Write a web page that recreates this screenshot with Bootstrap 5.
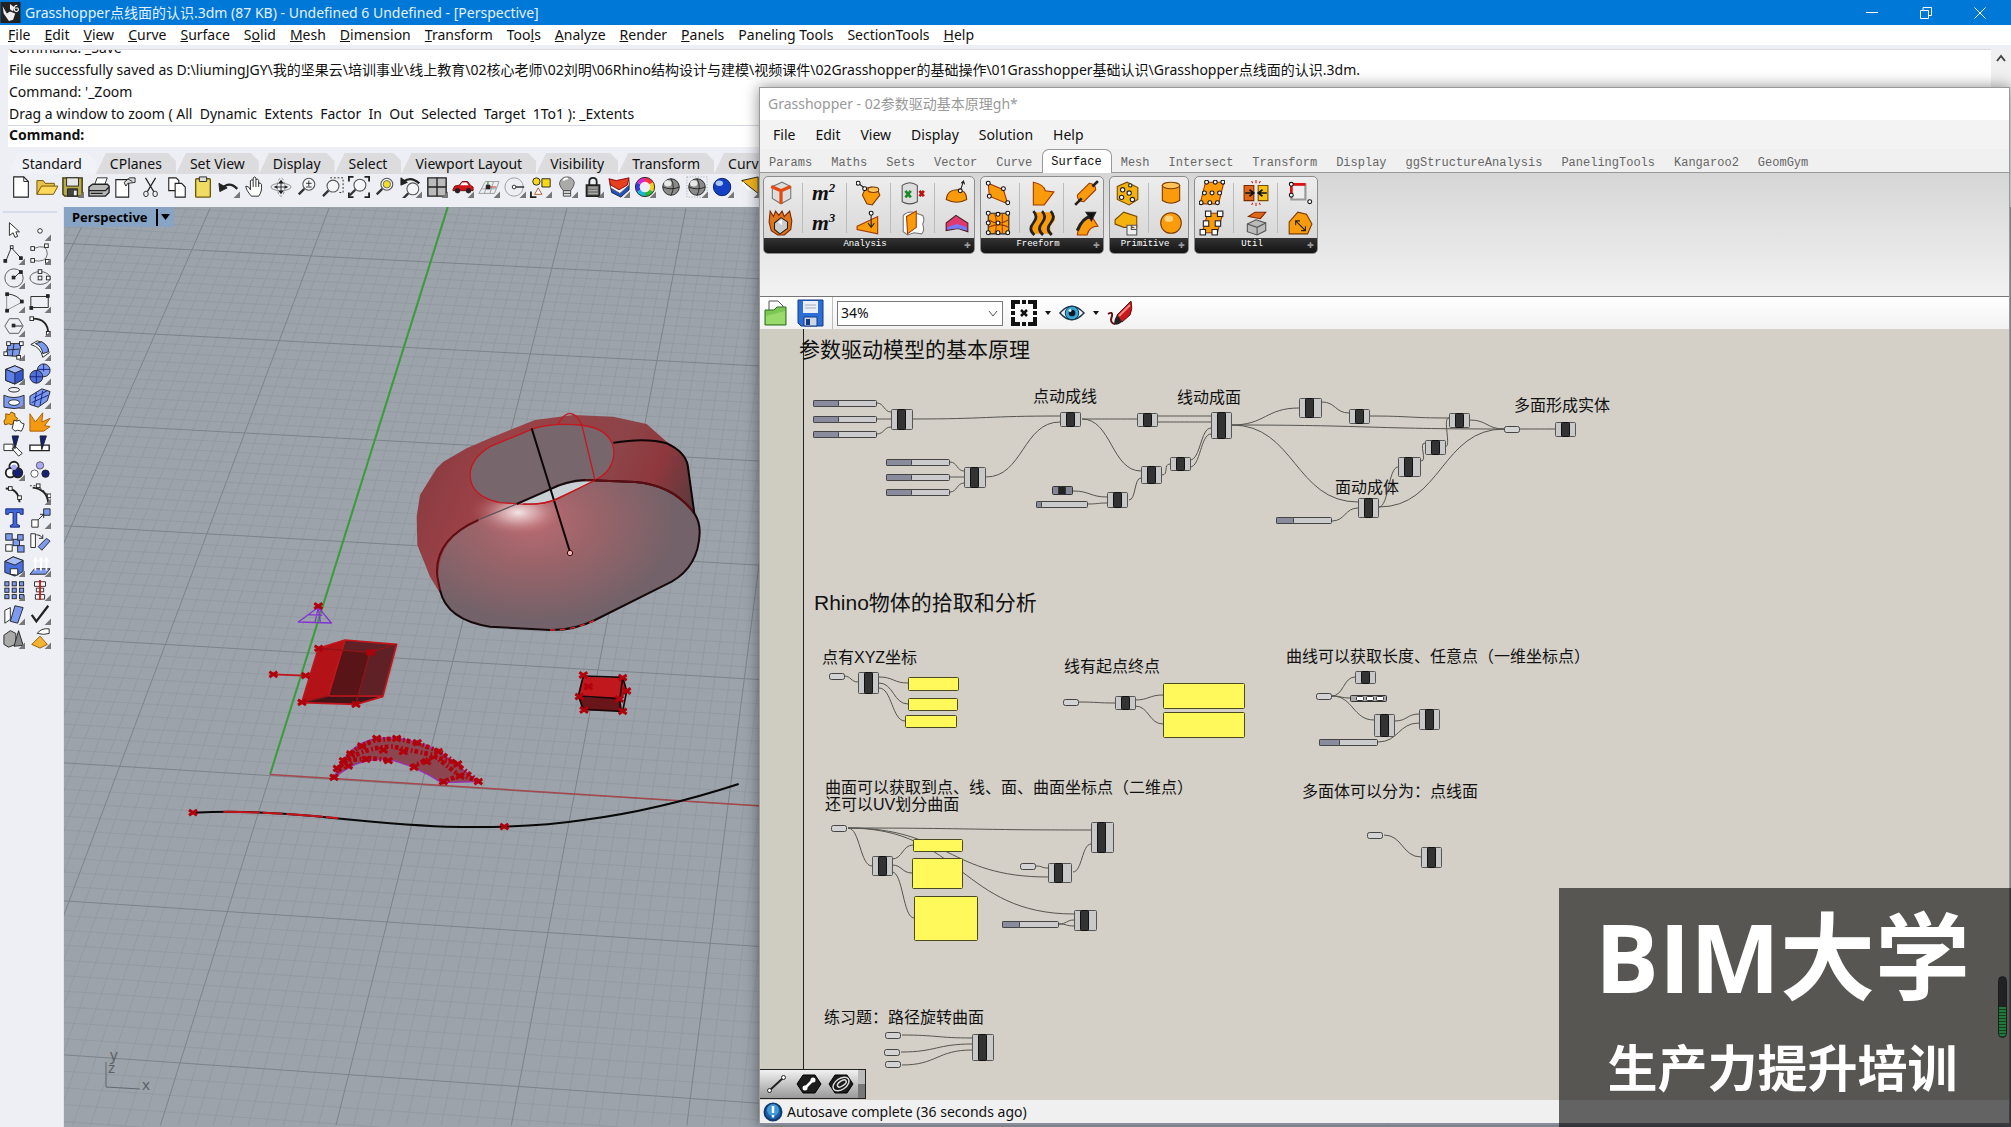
<!DOCTYPE html>
<html lang="zh-CN">
<head>
<meta charset="utf-8">
<meta name="viewport" content="width=device-width, initial-scale=1">
<title>Grasshopper点线面的认识.3dm</title>
<link href="https://cdn.jsdelivr.net/npm/bootstrap@5.3.0/dist/css/bootstrap.min.css" rel="stylesheet">
<style>
:root{--ui:"Noto Sans","Noto Sans CJK SC",sans-serif;--mono:"Liberation Mono","Noto Sans CJK SC",monospace;--chrome:#edeff5}
body{font:14px/20px var(--ui);color:#111;background:var(--chrome);height:100vh;overflow:hidden}
button{background:none;border:0;padding:0;color:inherit}
svg{display:block;flex:none}
.titlebar{height:25px;background:#0078d7;color:#e4f1fc}
.winbtn{width:54px;height:24px}
.menubar{height:20px;background:#fff;gap:14px}
.menubar a,.gh-menu a{color:#111;text-decoration:none}
.history{margin-left:8px;padding-left:1px;height:77px;background:#fff;border-top:1px solid #ddd;border-bottom:1px solid #d4d8e2;overflow:hidden;line-height:22px}
.prompt{margin-left:8px;padding-left:1px;height:21px;background:#fff;line-height:18px;font-weight:700}
.prompt input{border:0;outline:0;background:none;height:18px;padding:0}
.histscroll{width:20px;background:#f0f0f0}
.tooltabs{height:21px;margin:6px 0 0 8px;border-bottom:1px solid #d3d7e0}
.tooltabs button{height:21px;padding:0 14px;position:relative;background:#dcdcde;clip-path:polygon(10px 0,calc(100% - 8px) 0,100% 8px,100% 100%,0 100%)}
.tooltabs button.active{background:#f1f2f7}
.tools{height:33px;padding-left:8px}
.tools button{width:26px;height:26px;display:grid;place-items:center}
.tools svg,.side svg{width:22px;height:22px}
.side{width:64px;padding:3px 0 0 1px;border-right:1px solid #dfe3ea}
.side .grip{height:4px;margin:1px 6px 3px 2px;border-top:2px solid #d5dbea}
.side .pad{display:grid;grid-template-columns:26px 26px;grid-auto-rows:24px}
.side button{display:grid;place-items:center}
.view{background:#9ca3ab;position:relative;overflow:hidden}
.view>svg,.canvas>svg{position:absolute;inset:0;width:100%;height:100%}
.viewtag{position:absolute;left:0;top:0;height:20px;background:#87a4c5;font-size:13px;font-weight:700;padding:0 4px 0 8px;gap:8px;color:#000}
.viewtag i{border-left:2px solid #000;height:17px;padding-left:3px;display:flex;align-items:center}
/* Grasshopper window */
.gh{position:absolute;left:759px;right:1px;top:87px;bottom:2px;background:#f0f0f0;border:1px solid #999;border-bottom:2px solid #8a8e9c;box-shadow:0 0 14px rgba(0,0,0,.45)}
.gh-title{height:32px;background:#fff;color:#999;padding-left:8px}
.gh-menu{height:29px;background:#f3f3f3;gap:20px;padding-left:13px}
.gh-tabs{height:24px;padding-left:0;font:12px/24px var(--mono);color:#666;border-bottom:1px solid #999}
.gh-tabs button{height:24px;padding:0 10px 0 9px;padding-top:2px}
.gh-tabs button.active{color:#111;background:#fff;border:1px solid #999;border-bottom:0;border-radius:7px 7px 0 0;padding:0 9px 0 8px;height:24px}
.ribbon{height:123px;background:linear-gradient(#d6d6d6,#f2f2f2);padding:3px 0 0 3px;gap:5px}
.panelbox{height:78px;border:1px solid #8d8d8d;border-radius:5px;background:linear-gradient(#ededed,#d3d3d3);overflow:hidden}
.panelbox .cells{display:grid;grid-template-rows:28px 28px;grid-auto-flow:column;grid-auto-columns:28px;column-gap:16px;row-gap:2px;padding:2px 3px;height:61px}
.panelbox .cells button{display:grid;place-items:center;position:relative}
.panelbox .cells button:nth-child(2n+3)::before{content:"";position:absolute;left:-9px;top:4px;height:50px;border-left:1px solid #bbb}
.panelbox svg{width:26px;height:26px}
.cap{height:16px;background:linear-gradient(#333,#111);color:#fff;font:9px/13px var(--mono);position:relative;text-align:center;margin:0;padding-right:8px}
.cap::after{content:"✚";position:absolute;right:3px;top:1px;font:8px/14px "DejaVu Sans",sans-serif;color:#999}
.gh-tool{height:33px;background:linear-gradient(#fff,#f2f2f2);border-top:1px solid #777;padding-left:3px}
.gh-tool select{width:166px;height:25px;border:1px solid #7a7a7a;border-radius:0;background:#fff;padding:0 22px 0 3px;font-size:14px;appearance:none;color:#111}
.zoombox{position:relative}
.zoombox svg{position:absolute;right:5px;top:9px;pointer-events:none}
.tri{border:3px solid transparent;border-top:4px solid #111;border-bottom:0;margin:0 8px}
.canvas{background:#d4d0c8;position:relative;overflow:hidden}
.canvas text{font-family:"Liberation Sans","Noto Sans CJK SC",sans-serif;font-size:16px;fill:#111}
.canvas text.big{font-size:21px}
.dock{position:absolute;left:0;bottom:1px;height:30px;width:106px;border:1px solid #222;border-left:0;background:linear-gradient(#f2f2f2,#999);gap:6px;padding-left:4px}
.dock b{position:absolute;right:0;top:0;bottom:0;width:7px;background:linear-gradient(#bbb 50%,#777 50%)}
.gh-status{height:23px;gap:4px;padding-left:3px}
.mark-box{position:absolute;right:0;bottom:0;width:452px;height:239px;padding-right:5px;background:rgba(0,0,0,.59);color:#fff;font-weight:700;text-align:center;white-space:nowrap}
.mark-box .l1{font-family:"Open Sans","Noto Sans CJK SC",sans-serif;font-size:95px;line-height:104px;margin:16px 0 0}
.mark-box .l2{font-family:"Noto Sans CJK SC",sans-serif;font-size:50px;line-height:60px;margin:27px 0 0}
.meter{position:absolute;right:4px;bottom:89px;width:9px;height:62px;border-radius:5px;border:1px solid #1c1c1c;background:linear-gradient(#222 50%,transparent 50%),repeating-linear-gradient(#1f7a38 0 2px,#12401f 2px 3px)}
</style>
<script src="https://cdn.jsdelivr.net/npm/bootstrap@5.3.0/dist/js/bootstrap.bundle.min.js"></script>
</head>
<body class="d-flex flex-column">
<header>
  <div class="titlebar d-flex align-items-center">
    <svg class="ms-0 me-1" width="21" height="21" viewBox="0 0 19 20"><rect width="19" height="20" fill="#222"/><path d="M2 4l4 7 3-2 5 2-2 6-4 1-5-7zM9 2l4 3-1 4-3-2z" fill="#eee"/><path d="M16 3q-3 0-3 3t2 3 2-2-3-1" fill="none" stroke="#fff"/></svg>
    <span class="flex-grow-1">Grasshopper点线面的认识.3dm (87 KB) - Undefined 6 Undefined - [Perspective]</span>
    <button class="winbtn" aria-label="Minimize"><svg class="m-auto" width="12" height="12"><path d="M0 5.5h12" stroke="#fff"/></svg></button>
    <button class="winbtn" aria-label="Restore"><svg class="m-auto" width="12" height="12" fill="none" stroke="#fff"><path d="M.5 3.500h8v8h-8zM3 3V.5h8.500v8H9"/></svg></button>
    <button class="winbtn me-1" aria-label="Close"><svg class="m-auto" width="12" height="12"><path d="M.5.5l11 11m0-11l-11 11" stroke="#fff"/></svg></button>
  </div>
  <nav class="menubar d-flex align-items-center ps-2" aria-label="Main menu">
    <a href="#"><u>F</u>ile</a><a href="#"><u>E</u>dit</a><a href="#"><u>V</u>iew</a><a href="#"><u>C</u>urve</a><a href="#"><u>S</u>urface</a><a href="#">S<u>o</u>lid</a><a href="#"><u>M</u>esh</a><a href="#"><u>D</u>imension</a><a href="#"><u>T</u>ransform</a><a href="#">Too<u>l</u>s</a><a href="#"><u>A</u>nalyze</a><a href="#"><u>R</u>ender</a><a href="#"><u>P</u>anels</a><a href="#">Paneling Tools</a><a href="#">SectionTools</a><a href="#"><u>H</u>elp</a>
  </nav>
</header>
<section class="d-flex mt-1">
  <div class="flex-grow-1">
    <div class="history d-flex flex-column justify-content-end">
      <div>Command: _Save</div>
      <div>File successfully saved as D:\liumingJGY\我的坚果云\培训事业\线上教育\02核心老师\02刘明\06Rhino结构设计与建模\视频课件\02Grasshopper的基础操作\01Grasshopper基础认识\Grasshopper点线面的认识.3dm.</div>
      <div>Command: '_Zoom</div>
      <div>Drag a window to zoom ( All&nbsp; Dynamic&nbsp; Extents&nbsp; Factor&nbsp; In&nbsp; Out&nbsp; Selected&nbsp; Target&nbsp; 1To1 ): _Extents</div>
    </div>
    <div class="prompt d-flex"><label for="cmd">Command:</label><input id="cmd" class="flex-grow-1" type="text"></div>
  </div>
  <div class="histscroll"><svg class="mx-auto mt-1" width="10" height="12"><path d="M1 8l4-5 4 5" fill="none" stroke="#444" stroke-width="2"/></svg></div>
</section>
<div class="tooltabs d-flex">
  <button class="active">Standard</button><button>CPlanes</button><button>Set View</button><button>Display</button><button>Select</button><button>Viewport Layout</button><button>Visibility</button><button>Transform</button><button>Curve Tools</button>
</div>
<div class="tools d-flex" id="tools"></div>
<main class="d-flex flex-grow-1" style="min-height:0">
  <aside class="side"><div class="grip"></div><div class="pad" id="side"></div></aside>
  <div class="view flex-grow-1">
    <svg aria-label="Perspective viewport">
      <defs>
        <linearGradient id="shell" x1="0" x2="1" y1="0" y2=".3"><stop offset="0" stop-color="#84393e"/><stop offset=".3" stop-color="#9a4147"/><stop offset=".7" stop-color="#8d4448"/><stop offset=".85" stop-color="#8f383d"/><stop offset="1" stop-color="#5f3a3e"/></linearGradient>
        <radialGradient id="face" gradientUnits="userSpaceOnUse" cx="820" cy="390" r="430" gradientTransform="translate(0 120) scale(1 .7)"><stop offset="0" stop-color="#b96c73"/><stop offset=".4" stop-color="#9c6469"/><stop offset="1" stop-color="#736269"/></radialGradient>
        <radialGradient id="glow" gradientUnits="userSpaceOnUse" cx="775" cy="365" r="150" gradientTransform="translate(0 185) scale(1 .5)"><stop offset="0" stop-color="#f4e6e7"/><stop offset=".35" stop-color="#e4bcbf" stop-opacity=".7"/><stop offset="1" stop-color="#b05055" stop-opacity="0"/></radialGradient>
        <g id="pt"><path d="M-12-8l24 16M12-8l-24 16" stroke="#b0000c" stroke-width="9"/></g>
      </defs>
      <g transform="translate(-64 -207)">
        <path id="minor" fill="none" stroke="#8d939b" stroke-opacity=".55"/>
        <path id="major" fill="none" stroke="#7d838b"/>
        <path d="M270 774.500L448 206" stroke="#3a9e3a" stroke-width="2"/>
        <path d="M270 774.500L762 806" stroke="#a5474b" stroke-width="1.500"/>
        <path d="M106 1062v25l34 2" stroke="#63686f" fill="none"/>
        <g fill="#5c6168" font-size="15"><text x="110" y="1060">y</text><text x="108" y="1073">z</text><text x="142" y="1090">x</text></g>
        <g transform="translate(260 390) scale(.33333)" fill="none" stroke-linejoin="round">
          <path fill="url(#shell)" d="M470 380L480 315 530 235 550 215 620 175 700 140 825 90 940 75 1060 80 1160 102 1220 155Q1275 185 1283 225L1300 360 1319 430 1235 575 1005 690 870 720 690 710 540 610 510 560 472 465z"/>
          <path fill="url(#face)" d="M655 390L870 298Q920 272 975 270L1125 276Q1240 285 1303 370 1320 400 1319 430 1315 530 1235 575L1005 690Q940 722 870 720L690 710Q560 690 537 590 520 450 655 390z"/>
          <ellipse cx="775" cy="368" rx="150" ry="75" fill="url(#glow)"/>
          <path fill="#77676d" stroke="#c41820" stroke-width="4" d="M815 118Q870 98 960 105 1060 115 1062 190 1058 245 1005 270L890 325Q850 345 790 342L720 338Q632 320 630 255 632 205 690 170z"/>
          <path fill="#c8d0d3" d="M772 340L870 298Q930 273 1003 272L890 324Q850 344 772 340z"/>
          <path stroke="#16090b" stroke-width="6" d="M1303 370Q1240 285 1125 276L975 270Q920 272 870 298L770 342M540 600Q560 690 690 710L870 720Q940 722 1005 690L1235 575Q1315 530 1319 430 1320 395 1303 370"/>
          <path stroke="#5c5256" stroke-width="4" d="M770 342L655 390"/>
          <path stroke="#5e0d12" stroke-width="6" d="M655 390Q520 450 532 560L540 600M975 270L1125 276Q1240 285 1303 370"/>
          <path stroke="#e02028" stroke-width="4" stroke-dasharray="16 14" d="M870 720Q940 722 1005 690M1140 152l60 3"/>
          <path stroke="#0c0607" stroke-width="6" d="M1060 158Q1160 142 1220 160 1275 185 1283 225L1303 370M815 115L930 486"/>
          <path stroke="#c41820" stroke-width="4" d="M893 104Q912 70 930 70 955 72 968 115L1005 270M1003 272L890 328Q850 345 790 342"/>
          <circle cx="930" cy="489" r="8" fill="#e9b9bd" stroke="#400" stroke-width="3"/>
          <path stroke="#8433d0" stroke-width="4" d="M175 652L115 696 214 699zM175 652L165 697M145 674l42 2M115 696l60-44 6 46"/>
          <path fill="#b31317" d="M175 775L255 750 205 918 125 938z"/><path fill="#5f2125" d="M255 750L410 763 368 920 205 918z"/><path fill="#591418" d="M246 780L330 787 294 920 205 918z"/><path fill="#421317" d="M125 938L205 918 368 920 288 943z"/>
          <path stroke="#c0151b" stroke-width="5" d="M125 938L175 775 255 750 410 763 368 920 288 943zM205 918L255 750M205 918h163M40 853l95 4"/>
          <path stroke="#8f1519" stroke-width="4" d="M125 938l80-20M330 787L288 940M330 787L410 763M175 775l155 12"/>
          <path fill="#c1181d" d="M970 860L1088 864 1100 903 1085 928 955 918z"/><path fill="#691519" d="M958 920L1080 926 1088 964 965 960z"/><path stroke="#1a0708" stroke-width="5" d="M970 858L1088 862 1100 903 1088 964 970 958 955 918zM955 918L1080 926 1088 862M1080 926v36"/>
          <path fill="#8c4650" stroke="#9a30b4" stroke-width="4" d="M222 1165Q260 1060 350 1045 440 1035 540 1085L655 1175 545 1178Q470 1130 400 1112 300 1095 222 1165z"/>
          <path stroke="#b0000c" stroke-width="14" stroke-dasharray="11 8 5 6" d="M222 1165Q250 1080 350 1050L410 1045 475 1060 540 1085 595 1125 655 1175M240 1130Q300 1070 400 1070L520 1095 590 1150M250 1112L330 1105 390 1110M455 1130L520 1100 590 1120M545 1178L600 1155 650 1170"/>
          <path stroke="#080808" stroke-width="6" d="M-201 1268Q-20 1260 160 1278 420 1305 560 1310 800 1316 970 1290 1190 1262 1436 1182"/>
          <path stroke="#c5131a" stroke-width="6" stroke-dasharray="110 8 60 12" d="M-110 1265Q50 1266 235 1285"/>
          <g id="pts"></g>
        </g>
      </g>
    </svg>
    <button class="viewtag d-flex align-items-center">Perspective <i><svg width="9" height="6"><path d="M0 0h9L4.500 6z"/></svg></i></button>
  </div>
</main>

<section class="gh d-flex flex-column" aria-label="Grasshopper">
  <div class="gh-title d-flex align-items-center">Grasshopper - 02参数驱动基本原理gh*</div>
  <nav class="gh-menu d-flex align-items-center" aria-label="Grasshopper menu"><a href="#">File</a><a href="#">Edit</a><a href="#">View</a><a href="#">Display</a><a href="#">Solution</a><a href="#">Help</a></nav>
  <div class="gh-tabs d-flex align-items-start"><button>Params</button><button>Maths</button><button>Sets</button><button>Vector</button><button>Curve</button><button class="active">Surface</button><button>Mesh</button><button>Intersect</button><button>Transform</button><button>Display</button><button>ggStructureAnalysis</button><button>PanelingTools</button><button>Kangaroo2</button><button>GeomGym</button></div>
  <div class="ribbon d-flex align-items-start" id="ribbon"></div>
  <div class="gh-tool d-flex align-items-center">
    <button aria-label="Open" class="me-1"><svg width="26" height="28" viewBox="0 0 26 28"><path d="M6 2h9l5 5v10H6z" fill="#fff" stroke="#555"/><path d="M2 11h9l3-3h9v18H2z" fill="#7cc653" stroke="#2f6f1c"/><path d="M3 17l19-5v13H3z" fill="#9ada6c"/></svg></button>
    <button aria-label="Save" class="ms-1"><svg width="27" height="28" viewBox="0 0 27 28"><path d="M1 1h25v26H4l-3-3z" fill="#2a6fd8" stroke="#123a88"/><path d="M6 2h15v12H6z" fill="#e9eef7"/><path d="M8 6h11M8 9h11" stroke="#aab"/><path d="M7 18h13v9H7z" fill="#cfd6e4" stroke="#123a88"/><path d="M9 20h4v6H9z" fill="#123a88"/></svg></button>
    <div class="vr ms-2 me-1"></div>
    <div class="zoombox"><select aria-label="Zoom"><option>34%</option></select><svg width="10" height="8"><path d="M1 1l4 5 4-5" fill="none" stroke="#555"/></svg></div>
    <button aria-label="Zoom extents" class="ms-2"><svg width="26" height="26" viewBox="0 0 26 26"><path d="M2 9V2h7M17 2h7v7M24 17v7h-7M9 24H2v-7M11 2h4M11 24h4M2 11v4M24 11v4" fill="none" stroke="#111" stroke-width="4"/><path d="M10 10l6 6m0-6l-6 6" stroke="#111" stroke-width="2.500"/></svg></button>
    <span class="tri"></span>
    <button aria-label="Preview"><svg width="26" height="20" viewBox="0 0 27 20"><path d="M1 10Q13-4 26 10 13 24 1 10z" fill="#e9f5fb" stroke="#234" stroke-width="1.500"/><circle cx="13.500" cy="10" r="7" fill="#3aa7d9" stroke="#134"/><circle cx="13.500" cy="10" r="3.500" fill="#0a1a28"/><circle cx="11.500" cy="7.500" r="1.500" fill="#fff"/></svg></button>
    <span class="tri"></span>
    <button aria-label="Sketch"><svg width="26" height="26" viewBox="0 0 26 26"><path d="M10 15L24 1q2 8-1 14l-8 7z" fill="#c8191e" stroke="#611"/><path d="M12 16L23 5" stroke="#f48a86" stroke-width="2"/><path d="M10 15l5 7q-5 4-8 2 0-5 3-9z" fill="#222"/><path d="M1 14q5-3 4 2-3 7 3 8" fill="none" stroke="#611" stroke-width="2"/></svg></button>
  </div>
  <div class="canvas flex-grow-1">
    <svg aria-label="Definition canvas">
      <g transform="translate(-760 -329)">
        <path d="M761 329h42v740h-42z" fill="#cfccc2"/><path d="M803.500 329v740" stroke="#222"/>
        <g id="wires" fill="none" stroke="#55544f"></g>
        <g id="nodes"></g>
        <text class="big" x="799" y="357">参数驱动模型的基本原理</text>
        <text x="1033" y="402">点动成线</text><text x="1177" y="403">线动成面</text><text x="1514" y="411">多面形成实体</text><text x="1335" y="493">面动成体</text>
        <text class="big" x="814" y="610">Rhino物体的拾取和分析</text>
        <text x="822" y="663">点有XYZ坐标</text><text x="1064" y="672">线有起点终点</text><text x="1286" y="662">曲线可以获取长度、任意点（一维坐标点）</text>
        <text x="825" y="793">曲面可以获取到点、线、面、曲面坐标点（二维点）</text><text x="825" y="810">还可以UV划分曲面</text><text x="1302" y="797">多面体可以分为：点线面</text>
        <text x="824" y="1023">练习题：路径旋转曲面</text>
      </g>
    </svg>
    <div class="dock d-flex align-items-center">
      <button aria-label="Wire"><svg width="26" height="24" viewBox="0 0 26 24"><path d="M6 18L19 6" stroke="#222" stroke-width="2"/><circle cx="5.500" cy="18.500" r="2" fill="#fff" stroke="#222"/><circle cx="19.500" cy="5.500" r="2" fill="#fff" stroke="#222"/></svg></button>
      <button aria-label="Line"><svg width="26" height="24" viewBox="0 0 26 24"><path d="M7 3h12l6 9-6 9H7l-6-9z" fill="#1c1c1c" stroke="#000"/><path d="M9 16l8-8" stroke="#fff" stroke-width="2.500"/><circle cx="9" cy="16" r="2.500" fill="#fff"/><circle cx="17" cy="8" r="2.500" fill="#fff"/></svg></button>
      <button aria-label="Spiral"><svg width="26" height="24" viewBox="0 0 26 24"><path d="M7 3h12l6 9-6 9H7l-6-9z" fill="#1c1c1c" stroke="#000"/><g fill="none" stroke="#ddd" stroke-width="1.500" transform="rotate(-35 13 12)"><ellipse cx="13" cy="12" rx="9" ry="5.500"/><ellipse cx="14" cy="12" rx="5" ry="2.500"/></g></svg></button><b></b>
    </div>
  </div>
  <div class="gh-status d-flex align-items-center"><svg width="20" height="20" viewBox="0 0 20 20"><circle cx="10" cy="10" r="8.500" fill="#1c5fa8" stroke="#123a6e" stroke-width="2"/><circle cx="10" cy="8" r="6" fill="#3f9ad6"/><path d="M10 4v7M10 13v2.500" stroke="#fff" stroke-width="2.500"/></svg><span>Autosave complete (36 seconds ago)</span></div>
</section>
<div class="mark-box"><p class="l1">BIM大学</p><p class="l2">生产力提升培训</p><div class="meter"></div></div>

<script>
const $ = id => document.getElementById(id);
const fly = '<path d="M24 17v7h-7z" fill="#777" stroke="none"/>';
const ic = (name, body, f) => `<button aria-label="${name}"><svg viewBox="0 0 24 24" fill="none" stroke="#222">${body}${f ? fly : ''}</svg></button>`;
const lens = (x, y) => `<circle cx="${x}" cy="${y}" r="6.500" fill="#f4f6fa" stroke="#555" stroke-width="1.200"/><path d="M${x-5} ${y+5}l-6 6" stroke="#333" stroke-width="2.500"/>`;
const ball = c => `<circle cx="12" cy="12" r="9" fill="${c}" stroke="#222"/><path d="M3 12q9 4 18 0M12 3q5 9 0 18" stroke="#222"/><ellipse cx="8.500" cy="8" rx="4" ry="3.500" fill="#fff" fill-opacity=".8" stroke="none"/>`;
$('tools').innerHTML = [
 ['New','<path d="M4 1h11l5 5v17H4z" fill="#fff" stroke-width="1.200"/><path d="M15 1v5h5"/>'],
 ['Open','<path d="M1 20V5h7l2 3h10v3" fill="#e8c24a" stroke="#6b4e08"/><path d="M1 20l5-9h18l-5 9z" fill="#ffd95c" stroke="#6b4e08"/>'],
 ['Save','<path d="M1 2h21v20H3l-2-2z" fill="#b5ab4a" stroke="#3a360c" stroke-width="1.500"/><path d="M5 2h13v9H5z" fill="#e6e6e6"/><path d="M6 14h11v8H6z" fill="#444"/><path d="M13 16h3v5h-3z" fill="#eee" stroke="none"/>',1],
 ['Print','<path d="M7 10l3-8h11l-3 8" fill="#fff"/><path d="M1 12l4-3h16l2 2v7l-4 4H1z" fill="#b7b7b7" stroke-width="1.500"/><path d="M1 16h18l4-4M3 19h13" stroke-width="1.500"/>'],
 ['Properties','<path d="M2 4h14v19H2z" fill="#fff" stroke-width="1.200"/><path d="M11 7l6-5h6v5l-8 1-2 3z" fill="#ddd"/><path d="M15 3l5 3"/>'],
 ['Cut','<path d="M6 2l9 15M17 2L8 17" stroke-width="1.300"/><ellipse cx="6.500" cy="19.500" rx="2.500" ry="3"/><ellipse cx="16.500" cy="19.500" rx="2.500" ry="3"/>'],
 ['Copy','<path d="M3 2h8l3 3v11H3z" fill="#fff" stroke-width="1.200"/><path d="M10 8h7l4 4v11H10z" fill="#fff" stroke-width="1.200"/>'],
 ['Paste','<rect x="4" y="3" width="16" height="20" rx="1" fill="#f1dc63" stroke="#6b5a08" stroke-width="1.500"/><path d="M8 1h8v5H8z" fill="#ddd"/>'],
 ['Undo','<path d="M4 14Q12 5 21 14" stroke-width="2.500"/><path d="M1 8l1 9 8-4z" fill="#222"/>',1],
 ['Pan','<path d="M8 22Q2 15 2 11l3 1 2 3V5q2-2 3 0V2q2-2 3 0v2q2-2 3 1v3q2-1 3 1 1 8-3 13z" fill="#fff"/><path d="M10 5v7M13 4v8M16 7v5"/>'],
 ['Rotate','<ellipse cx="12" cy="12" rx="11" ry="4" stroke="#888"/><ellipse cx="12" cy="12" rx="4" ry="10" stroke="#888" stroke-dasharray="3 2"/><path d="M12 7v10M8 12h8"/><path d="M12 4l3 4H9zM12 20l3-4H9zM4 12l4-2v4zM20 12l-4-2v4z" fill="#222" stroke="none"/>'],
 ['Zoom',lens(14,9)+'<path d="M11 8h6M14 5v6M11 12h6"/>'],
 ['Zoom window','<path d="M9 2h14v16h-6" stroke-dasharray="2 2"/>'+lens(12,11)],
 ['Zoom extents','<path d="M1 6V1h5M18 1h5v5M23 18v5h-5M6 23H1v-5" stroke-width="2"/>'+lens(13,10)],
 ['Zoom selected',lens(14,9)+'<circle cx="14" cy="9" r="4" fill="#f4dc2a" stroke="#665"/>'],
 ['Undo view','<path d="M4 6Q12 0 21 8" stroke-width="2.500"/><path d="M1 2v8l7-3z" fill="#222"/>'+lens(14,14),1],
 ['Four views','<path d="M2 2h20v20H2z" fill="#bbb" stroke-width="1.500"/><path d="M12 2v20M2 12h20" stroke-width="1.500"/>',1],
 ['Named view','<path d="M1 15l2-4 5-1 3-4h6l3 4 3 2v4H1z" fill="#d3141a" stroke="#7a0a0e"/><path d="M11 7h5l2 3H9z" fill="#fff" stroke="none"/><circle cx="6" cy="16" r="2.500" fill="#222"/><circle cx="18" cy="16" r="2.500" fill="#222"/>',1],
 ['Set CPlane','<path d="M1 19L8 6h15l-5 13zM4 14h16M11 6L7 19M17 6l-4 13" stroke="#999"/><path d="M11 12h9" stroke="#c22"/><path d="M11 12V6" stroke="#2a2"/><path d="M9 10h4v4H9z" fill="#222"/>',1],
 ['Snap','<circle cx="11" cy="12" r="10" stroke="#999"/><circle cx="11" cy="12" r="2" fill="#fff"/><path d="M13 12h9" stroke-width="1.500"/>',1],
 ['Select','<circle cx="7" cy="6" r="4" fill="#f7d917"/><path d="M13 3h9v9h-9z" fill="#f7d917"/><path d="M9 13l4 7H5z" fill="#fff" stroke="#a52"/><path d="M1 17v6h6" stroke-width="2"/>',1],
 ['Hide','<path d="M8 16Q3 10 4 7q2-6 8-6t8 6q0 4-4 9z" fill="#aaa" stroke="#555"/><path d="M8 16h8v6H8zM8 19h8" fill="#ddd" stroke="#444"/><path d="M8 5q2-3 5-2" stroke="#fff" stroke-width="2"/>',1],
 ['Lock','<path d="M8 10V6q0-4 4-4t4 4v4" stroke-width="2"/><path d="M5 10h14v12H5z" fill="#777" stroke-width="2"/><path d="M7 13h10M7 16h10M7 19h10" stroke="#bbb"/>',1],
 ['Layers','<path d="M2 8l10 6 11-7v8l-9 8L4 18z" fill="#2352c5" stroke="#123"/><path d="M2 6l10 6 11-8v6l-10 9L3 13z" fill="#fff" stroke="#555"/><path d="M1 3l8 2 14-3-2 8-9 5-9-5z" fill="#e6401c" stroke="#801"/>',1],
 ['Colour','<g stroke-width="4.500"><path d="M12 4a8 8 0 0 1 7 4" stroke="#f33"/><path d="M19 8a8 8 0 0 1 0 8" stroke="#f2d21b"/><path d="M19 16a8 8 0 0 1-7 4" stroke="#34b233"/><path d="M12 20a8 8 0 0 1-7-4" stroke="#19b6d6"/><path d="M5 16a8 8 0 0 1 0-8" stroke="#3838dd"/><path d="M5 8a8 8 0 0 1 7-4" stroke="#d22bd2"/></g><circle cx="12" cy="12" r="10.500"/>',1],
 ['Shaded',ball('#8b8b8b')],
 ['Ghosted','<path d="M1 1h22v22H1z" stroke-dasharray="1 2" stroke="#999"/>'+ball('#8b8b8b'),1],
 ['Rendered','<circle cx="11" cy="12" r="9.500" fill="#1440c4" stroke="#0a1c66"/><ellipse cx="8" cy="8" rx="4" ry="3" fill="#a9c4ff" stroke="none"/>',1],
 ['Light','<path d="M4 5l18-4v18z" fill="#f4b61d"/><path d="M5 7l8 9" stroke="#fff" stroke-width="2"/>',1]
].map(a => ic(...a)).join('');

const sq = (x, y, c = '#fff', s = 4) => `<rect x="${x}" y="${y}" width="${s}" height="${s}" fill="${c}"/>`;
const B = '#7b9af0', D = '#14207a';
$('side').innerHTML = [
 ['Pointer','<path d="M7 4v14l4-3 2 5 3-1-2-5h4z" fill="#fff"/>'],
 ['Point','<circle cx="12" cy="13" r="2.500" fill="#fff"/>',1],
 ['Polyline','<path d="M3 20L9 5l11 12"/>'+sq(1,18,'#222',3)+sq(8,3,'#fff',3)+sq(18,15,'#222',3),1],
 ['Curve','<path d="M5 6Q20 0 20 12 19 22 4 19" stroke="#666"/>'+sq(2,4)+sq(17,1)+sq(2,17)+sq(18,18),1],
 ['Circle','<circle cx="12" cy="12" r="10" stroke="#555"/><path d="M12 12l7-7"/>'+sq(10,10,'#222',3)+sq(18,4,'#222',3),1],
 ['Ellipse','<ellipse cx="12" cy="12" rx="11" ry="7" stroke="#555"/>'+sq(10,3)+sq(10,10)+sq(19,10),1],
 ['Arc','<path d="M4 3v18l17-9" stroke="#888"/><path d="M21 12Q16 4 4 3"/>'+sq(3,2,'#222',3)+sq(3,20,'#222',3)+sq(19,10,'#222',3),1],
 ['Rectangle','<path d="M2 6h19v12H2z"/>'+sq(19,4,'#222',3)+sq(1,17,'#222',3),1],
 ['Polygon','<path d="M7 4h10l5 8-5 8H7l-5-8z" stroke="#555"/><path d="M11 12h10"/>'+sq(10,10,'#222',3),1],
 ['Fillet','<path d="M4 4q17 0 17 17" stroke-width="2"/>'+sq(1,2)+sq(19,18),1],
 ['Surface','<path d="M6 5h14l-3 14-14-1z" fill="'+B+'"/><path d="M12 5l-2 14M4 12l14-1"/>'+sq(4,3)+sq(18,3)+sq(15,18)+sq(1,14),1],
 ['Loft','<path d="M2 6l7-4Q20 4 22 15l-7 5Q13 9 2 6z" fill="#fff"/><path d="M7 5l7-2q8 5 7 11l-6 2Q14 8 7 5z" fill="'+B+'"/>',1],
 ['Box','<path d="M3 7l10-4 9 4v11l-9 5-10-4z" fill="#3657cc"/><path d="M3 7l10-4 9 4-9 4z" fill="#a9bcfa"/><path d="M3 7l10 4v12L3 19z" fill="#5d7fe8"/>',1],
 ['Union','<circle cx="16" cy="8" r="7" fill="'+B+'"/><circle cx="8" cy="15" r="7" fill="#5170d8"/><path d="M1 15h14M8 8v14M10 7h13M16 1v8" stroke="#14207a"/>',1],
 ['Project','<ellipse cx="12" cy="3" rx="6" ry="2.500"/><path d="M1 9q11 5 22 0v13q-11 3-22 0z" fill="'+B+'"/><ellipse cx="12" cy="17" rx="6" ry="3" fill="#fff"/>',1],
 ['Mesh','<path d="M1 10L14 2l9 3-3 10-10 7-9-3z" fill="'+B+'"/><path d="M5 12l15-8M3 17l18-8M8 6l-2 14M15 4l-3 16" stroke="#14207a"/>',1],
 ['Join','<path d="M3 3l4 1 2-3 4 2v3l3 2-2 4-3 1-1 2-4-1-4 1-1-4 2-3z" fill="#f3a51a" stroke="#7a4a00"/><path d="M12 10l3 1 3-1 2 3 3 1-1 4-2 4-4-1-3 1-3-3 1-4z" fill="#fff"/>'],
 ['Explode','<path d="M1 22V3l6 9 8-10-1 10 9-4-6 8 6 1-7 5z" fill="#f49a12" stroke="#a85b00"/>'],
 ['Split','<path d="M1 10h10v7H1zM13 12l8 8-4 3-7-8z" fill="#fff"/><path d="M10 1h7l-4 14z" fill="'+D+'"/>'],
 ['Trim','<path d="M1 11h21v6H1z" fill="#fff" stroke-width="1.500"/><path d="M12 1h7l-5 15z" fill="'+D+'"/>'],
 ['Group','<g stroke-width="2"><circle cx="12" cy="8" r="5" fill="#fff"/><circle cx="8" cy="15" r="5" fill="#fff"/><circle cx="16" cy="15" r="5" fill="'+D+'"/></g><circle cx="12" cy="9" r="3" fill="#a9a9f4" stroke="none"/>',1],
 ['Ungroup','<circle cx="12" cy="7" r="4" fill="#a9a9f4" stroke="#555"/><circle cx="6" cy="16" r="4" fill="#fff" stroke="#555"/><circle cx="18" cy="16" r="4" fill="'+D+'"/>'],
 ['Edit points','<path d="M3 6q14 0 15 15" stroke-width="2"/>'+sq(6,4)+sq(16,14)],
 ['Control points','<path d="M4 5q16 2 17 17" stroke-width="2"/><path d="M1 3h8l9 7 4 8" stroke-dasharray="2 2"/>'+sq(8,1)+sq(20,12),1],
 ['Text','<path d="M3 2h19v6h-3l-1-2h-3v13l3 1v2H8v-2l3-1V6H7L6 8H3z" fill="#4166d6" stroke="#14207a"/>'],
 ['Move','<path d="M3 14h7v8H3z" fill="#fff"/><path d="M16 2h7v7h-7z" fill="'+B+'"/><path d="M10 14l6-6M12 8h4v4"/>',1],
 ['Copy objects',sq(3,3,B,7)+sq(3,15,'#fff',7)+sq(11,9,B,7)+sq(16,4,B,6)+sq(16,16,B,7)],
 ['Rotate objects','<path d="M2 3h5v15H2z" fill="#fff"/><path d="M10 17l9-9 4 3-9 10z" fill="'+B+'"/><path d="M8 4q5 0 7 4m0-4v4h-4"/>'],
 ['Boolean','<path d="M2 7l9-5 11 4v12l-9 5-11-4z" fill="#4a70e0"/><path d="M2 7l9-5 11 4-9 5z" fill="#a9bcfa"/><path d="M8 15h8v7l-8-1z" fill="#fff"/>',1],
 ['Extrude','<path d="M6 15h17l-5 6H1z" fill="'+B+'"/><path d="M7 17V5M13 17V5M19 17V5" stroke="#fff" stroke-width="2"/><path d="M4 7l3-5 3 5zM10 7l3-5 3 5zM16 7l3-5 3 5z" fill="#fff" stroke="none"/>',1],
 ['Array',[2,9,16].map(y=>[2,10,18].map(x=>sq(x,y+1,B,4.500)).join('')).join(''),1],
 ['Align','<path d="M6 3h12v5H6zM8 10h8v4H8zM7 17h10v5H7z" fill="#fff"/><path d="M12 1v22" stroke="#d11" stroke-width="2"/>',1],
 ['Mirror','<path d="M2 8l6-3v13l-6 4z" fill="#fff"/><path d="M13 3l9 2-6 17-8-2z" fill="'+B+'"/>',1],
 ['Check','<path d="M3 13l5 7L21 3" stroke-width="2.500"/>',1],
 ['Solids','<path d="M1 9l7-5 6 3v12l-8 3-5-3z" fill="#aaa"/><path d="M17 4l5 16-10 1z" fill="#888"/>',1],
 ['Pick','<path d="M12 10l8 9-8 4-9-4z" fill="#f4b333" stroke="#8a5a00"/><path d="M9 7q4-6 13-5v5l-6 1z" fill="#fff"/>',1]
].map(a => ic(...a)).join('');

const O = '#f99b0b', dot = (x, y) => `<circle cx="${x}" cy="${y}" r="1.800" fill="#fff" stroke="#111"/>`;
const em = n => `<text x="0" y="18" font-family="Liberation Serif" font-style="italic" font-weight="700" font-size="20" fill="#111" stroke="none">m<tspan dy="-7" font-size="12">${n}</tspan></text>`;
const groups = {
 Analysis: [
  ['Deconstruct','<path d="M4 6l9-4 8 4v11l-9 5-8-5z" fill="#ddd" stroke="#777"/><path d="M3 6l9 4 9-4M12 10v12" stroke="#e34a12" stroke-width="3"/>'],
  ['Sun','<path d="M2 1l3 5 2-5 3 4 3-4 2 5 5-5 2 9-1 8-6 5H9l-6-4-2-8z" fill="#e0741a" stroke="#7a2a00"/><path d="M6 12l6-5 6 4v6l-7 5-5-4z" fill="#ccc"/><path d="M9 11l4-2v5z" fill="#fff" stroke="none"/>'],
  ['Area',em(2)],['Volume',em(3)],
  ['Evaluate','<path d="M8 9q6-5 12 0l2 5-7 9-5-1-4-8z" fill="'+O+'" stroke="#7a3a00"/><ellipse cx="16" cy="9" rx="5" ry="2.500" fill="#ffc35c" stroke="#7a3a00"/><path d="M2 3l8 6"/>'+dot(2,3)+dot(8,8)],
  ['Curvature','<path d="M1 15l19-9v16L1 18z" fill="'+O+'" stroke="#a33800"/><path d="M14 4v11M11 12l3 4 3-4"/>'+dot(14,3)],
  ['Inside','<path d="M2 5q7-5 14 0v15q-7 4-14 0z" fill="#ddd" stroke="#555"/><path d="M5 10l5 6m0-6l-5 6" stroke="#1a8a2a" stroke-width="2.500"/><path d="M18 10l4 5m0-5l-4 5" stroke="#b11" stroke-width="2.500"/>'],
  ['Trim test','<path d="M3 5q4-4 9-3l9 3q2 4 0 8 2 6-1 9l-7-1-6 2-4-3z" fill="#fff" stroke="#777"/><path d="M6 6l9-5v15l-8 6z" fill="'+O+'" stroke="#a33800"/>'],
  ['Closest','<path d="M2 18q1-9 10-9t9 9q-9 5-19 0z" fill="'+O+'" stroke="#7a3a00"/><path d="M15 10l3-9M16 3l2-2 1 3"/>'+dot(15,10)],
  ['Tangent','<path d="M2 12l9-7 11 7v8l-9-3-11 2z" fill="#e03870" stroke="#422"/><path d="M3 16l9-3 9 3v3l-8-2-10 1z" fill="#77f" stroke="none"/>']],
 Freeform: [
  ['4Point','<path d="M3 3l14 6 4 13L4 15z" fill="'+O+'" stroke="#a33800"/>'+dot(3,3)+dot(17,8)+dot(21,21)+dot(4,15)],
  ['Patch','<path d="M3 3h19v19H3z" fill="'+O+'"/><path d="M3 9q9 6 19 0M3 16q10-5 19 0M9 3q3 10 0 19M16 3v19" stroke="#a33800"/>'+dot(3,3)+dot(12,4)+dot(21,3)+dot(3,12)+dot(3,21)+dot(12,21)+dot(21,21)+dot(12,12)],
  ['Boundary','<path d="M4 2q10 2 11 8l8 1-9 12H4z" fill="'+O+'" stroke="#a33800"/>'],
  ['Loft','<path d="M4 2q6 6 0 11t1 9h17q-5-5 0-10t-1-10z" fill="'+O+'" stroke="none"/><path d="M4 1q5 5 0 11t1 11M12 1q5 5 0 11t1 11M20 1q5 5 0 11t1 11" stroke-width="2.500"/>'],
  ['Pipe','<path d="M4 14L15 3q6 1 6 6L10 20q-6 0-6-6z" fill="'+O+'" stroke="#a33800"/><path d="M18 6l5-5M2 23l6-6" stroke-width="2.500"/>'],
  ['Sweep','<path d="M4 23Q6 7 18 7l5 8q-8 0-10 8z" fill="'+O+'" stroke="#a33800"/><path d="M4 19Q9 7 16 6" stroke-width="3"/><path d="M12 2h9l-4 8z" fill="#111"/>']],
 Primitive: [
  ['Bounding box','<path d="M3 6l9-4 10 5v11l-8 5-11-5z" fill="#f4b20f" stroke="#7a4a00"/><circle cx="8" cy="9" r="2" fill="#fff"/><circle cx="14" cy="12" r="2" fill="#fff"/><circle cx="7" cy="16" r="2" fill="#fff"/><circle cx="15" cy="5" r="1.500" fill="#fff"/><circle cx="17" cy="18" r="2" fill="#fff"/>'],
  ['Box','<path d="M1 9l8-7 12 4v10H9l-8-3z" fill="#f4b20f" stroke="#7a4a00"/><path d="M12 14h9v9h-9zM16 14v4h5" fill="#eee" stroke="#555"/>'],
  ['Cylinder','<path d="M4 5v14q8 5 16 0V5z" fill="'+O+'" stroke="#7a3a00"/><ellipse cx="12" cy="5" rx="8" ry="3" fill="#fdc258" stroke="#7a3a00"/>'],
  ['Sphere','<circle cx="12" cy="12" r="9.500" fill="'+O+'" stroke="#7a3a00"/><ellipse cx="10" cy="8" rx="4" ry="3" fill="#ffd27c" stroke="none"/>']],
 Util: [
  ['Divide','<path d="M6 2h17l-5 20H1z" fill="'+O+'" stroke="#a33800"/>'+dot(7,2)+dot(15,2)+dot(22,2)+dot(5,12)+dot(12,12)+dot(19,12)+dot(2,21)+dot(10,21)+dot(17,21)],
  ['Frames','<path d="M8 3h14l-5 18H3z" fill="'+O+'" stroke="#a33800"/>'+sq(6,1,'#fff',5)+sq(17,1,'#fff',5)+sq(4,10,'#fff',5)+sq(15,10,'#fff',5)+sq(1,18,'#fff',5)+sq(12,18,'#fff',5)],
  ['Flip','<path d="M1 5h9v14H1z" fill="#e0661a" stroke="#7a2a00"/><path d="M14 5h9v14h-9z" fill="#f6c115" stroke="#7a4a00"/><path d="M2 12h7M6 9l4 3-4 3M22 12h-7M18 9l-4 3 4 3" stroke="#111" stroke-width="1.500"/><path d="M12 0v3M8 1l1 2M16 1l-1 2M12 21v3M8 23l1-2M16 23l-1-2" stroke="#c22"/>'],
  ['Retrim','<path d="M5 6l6-4h10l-5 6z" fill="#e0661a" stroke="#7a2a00"/><path d="M4 13l8-4 9 3v7l-8 4-9-3z" fill="#bbb" stroke="#555"/><path d="M4 13l9 3 8-4M13 16v7" stroke="#555"/>'],
  ['Edges','<path d="M4 4h13v14H4z" fill="#eee" stroke="#999" stroke-width="2"/><path d="M4 15V4h13" stroke="#d11" stroke-width="2.500"/>'+dot(4,4)+dot(4,14)+dot(21,20)],
  ['Copy trim','<path d="M2 22V11L10 2l8 2 5 9-4 9z" fill="'+O+'" stroke="#7a3a00"/><path d="M8 10l9 9M8 14v-4h4M17 15v4h-4"/>']]
};
$('ribbon').innerHTML = Object.entries(groups).map(([n, a]) => `<div class="panelbox"><div class="cells">${a.map(i => ic(...i)).join('')}</div><p class="cap">${n}</p></div>`).join('');

/* construction plane grid: i counts columns, k counts rows, ten minor steps per major line */
const px = x => 60 + x / 2.24, py = y => 200 + y / 1.688;
let minor = '', major = '';
const add = (n, d) => n % 10 ? minor += d : major += d;
for (let n = -80; n <= 80; n++) {
  const i = n / 10;
  add(n, `M${px(869 + 266.500 * i).toFixed(1)} ${py(14).toFixed(1)}L${px(225 + 393 * i).toFixed(1)} ${py(1562).toFixed(1)}`);
}
for (let n = -32; n <= 60; n++) {
  const k = n / 10;
  add(n, `M${px(8).toFixed(1)} ${py((950 - 171.600 * k) / (1 + .0519 * k)).toFixed(1)}L${px(1568).toFixed(1)} ${py((1023 - 171 * k) / (1 + .0524 * k)).toFixed(1)}`);
}
$('minor').setAttribute('d', minor);
$('major').setAttribute('d', major);
$('pts').innerHTML = [[175,648],[40,853],[137,857],[176,775],[332,787],[126,937],[288,943],[970,855],[1088,863],[1100,903],[958,920],[985,890],[1078,927],[972,960],[1088,964],[733,1310],[-201,1268],[222,1162],[350,1045],[410,1045],[472,1058],[535,1085],[593,1122],[655,1175],[550,1175],[462,1132],[385,1112],[318,1108],[305,1068],[272,1092],[250,1112],[232,1135],[265,1128],[600,1158],[500,1115],[430,1085],[370,1080]]
 .map(([x, y]) => `<use href="#pt" x="${x}" y="${y}"/>`).join('');

/* definition graph */
const comp = [[891,409,22,20],[964,467,22,20],[1060,412,21,14],[1137,413,21,13],[1211,412,21,26],[1299,398,23,19],[1349,409,21,14],[1449,413,21,14],[1555,422,21,14],[1425,440,21,14],[1398,457,23,19],[1358,498,21,19],[1141,466,21,17],[1170,457,21,13],[1107,492,21,15],
 [858,672,21,21],[1115,696,21,13],[1355,671,21,12],[1374,714,21,22],[1419,709,21,20],[872,856,21,19],[1048,863,24,19],[1091,822,23,30],[1074,910,23,20],[1421,847,21,20],[972,1034,22,26]];
const slid = [[813,400,64,26],[813,416,64,26],[813,431,64,26],[886,459,64,26],[886,474,64,26],[886,489,64,26],[1276,517,56,18],[1036,501,52,6],[1319,739,59,21],[1002,921,57,18]];
const par = [[1504,426],[829,673],[1063,699],[1316,693],[831,825],[1020,863],[1367,832],[885,1032],[884,1049],[885,1061]];
const pan = [[908,677,51,13],[908,698,50,12],[905,715,52,12],[1163,683,82,25],[1163,712,82,25],[913,839,50,12],[912,858,51,30],[914,896,64,44]];
const wires = [[877,403,891,412],[877,419,891,419],[877,434,891,427],[950,462,964,471],[950,477,964,477],[950,492,964,483],[913,419,1060,416],[986,477,1060,422],[1082,419,1137,419],[1082,419,1141,471],[1158,416,1211,416],[1158,422,1211,422],[1162,475,1170,464],[1190,460,1211,428],[1190,467,1211,434],[1073,491,1107,497],[1088,504,1107,503],[1129,500,1141,478],[1232,425,1299,408],[1232,425,1504,429],[1232,425,1358,502],[1322,402,1349,413],[1370,416,1449,418],[1470,420,1504,429],[1519,429,1555,429],[1445,447,1449,418],[1421,461,1425,443],[1379,507,1398,467],[1379,507,1504,429],[1332,521,1358,508],
 [844,676,858,682],[879,677,908,683],[879,683,908,704],[879,688,905,721],[1079,702,1115,703],[1135,700,1163,695],[1135,706,1163,724],[1332,696,1355,677],[1332,696,1350,698],[1332,696,1374,720],[1395,721,1419,714],[1378,742,1419,723],[848,828,1091,830],[848,828,872,866],[848,828,1048,877],[848,828,1074,914],[892,859,913,845],[892,865,912,873],[892,872,914,918],[1036,866,1048,868],[1073,872,1091,844],[1059,924,1074,920],[1059,924,1074,926],[1384,835,1421,857],[902,1035,972,1038],[901,1052,972,1044],[902,1065,972,1050]];
$('wires').innerHTML = '<path d="' + wires.map(([a, b, c, d]) => { const h = Math.max(Math.abs(c - a) / 2, 7); return `M${a} ${b}C${a + h} ${b} ${c - h} ${d} ${c} ${d}`; }).join('') + '"/>';
const box = (x, y, w, h, f, s = '#333', r = 1) => `<rect x="${x + .5}" y="${y + .5}" width="${w - 1}" height="${h}" rx="${r}" fill="${f}" stroke="${s}"/>`;
$('nodes').innerHTML =
 comp.map(([x, y, w, h]) => box(x, y, w, h, '#c9c9ca', '#555') + box(x + 6, y, 9, h, '#333', '#111')).join('') +
 box(1052, 486, 21, 8, '#85859a') + box(1058, 486, 8, 8, '#222') +
 slid.map(([x, y, w, f]) => box(x, y, w, 6, '#cbcbcd', '#444') + box(x, y, f, 6, '#8b8b9e', '#444')).join('') +
 par.map(([x, y]) => box(x, y, 16, 6, '#d3d3d3', '#444', 2)).join('') +
 box(1350, 695, 37, 6, '#aaa') + box(1356, 696, 8, 4, '#fff', '#333') + box(1366, 696, 8, 4, '#fff', '#333') + box(1376, 696, 8, 4, '#fff', '#333') +
 pan.map(([x, y, w, h]) => box(x, y, w, h, '#fff95c', '#4a4a20')).join('');
</script>
</body>
</html>
